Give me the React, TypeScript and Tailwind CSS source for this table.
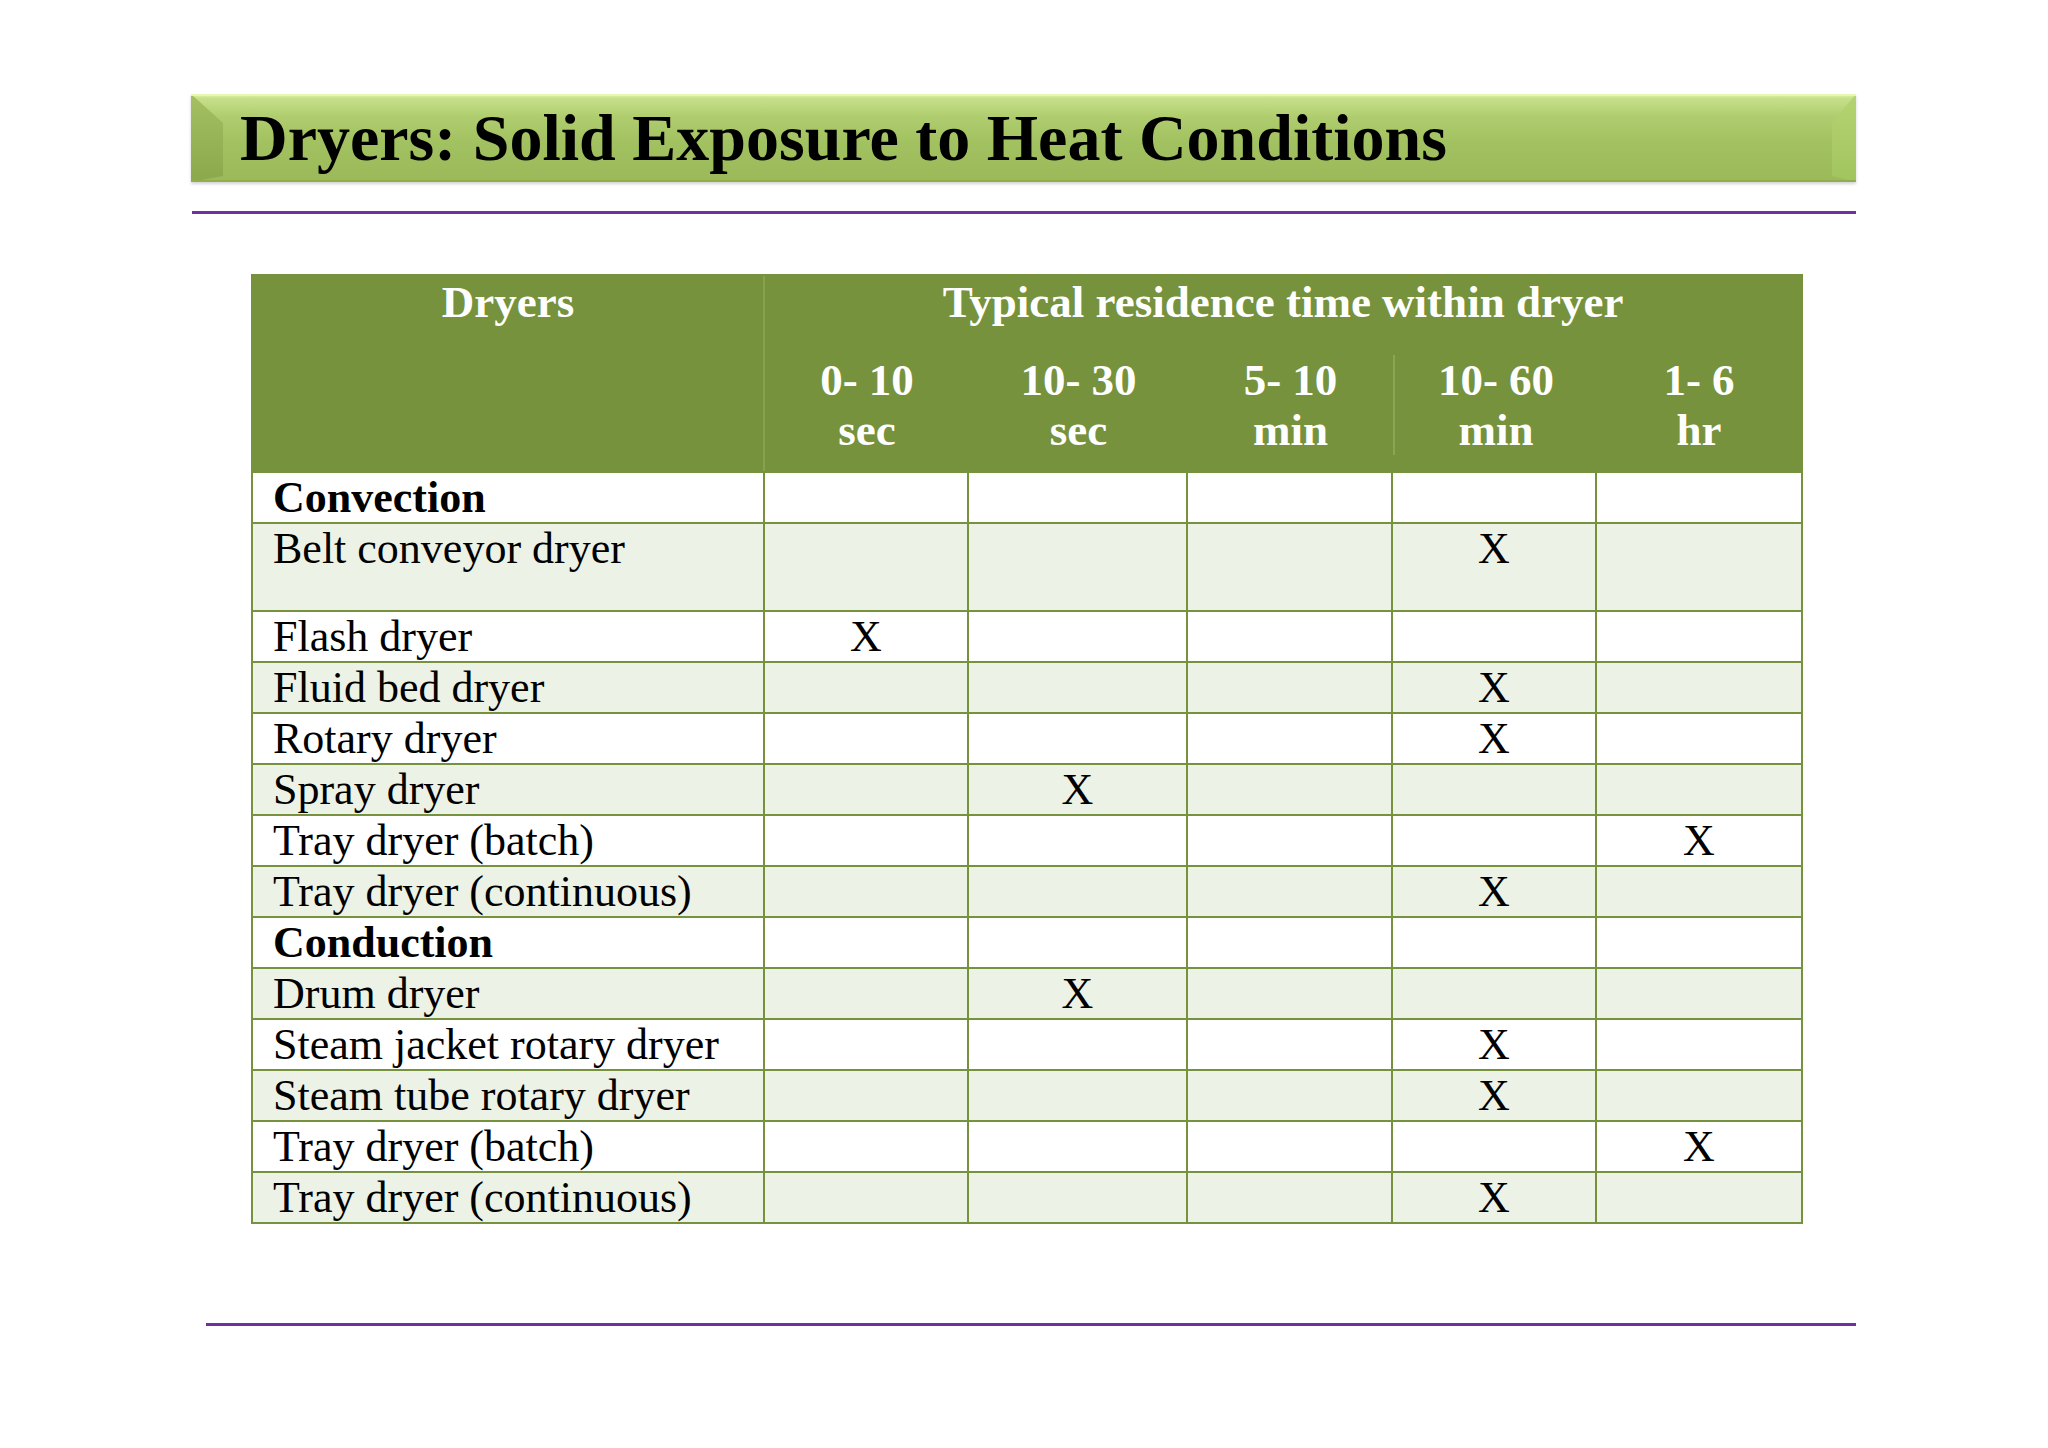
import React from "react";

type Row = { label: string; bold?: boolean; x: number; tall?: boolean };

const rows: Row[] = [
  { label: "Convection", bold: true, x: -1 },
  { label: "Belt conveyor dryer", x: 3, tall: true },
  { label: "Flash dryer", x: 0 },
  { label: "Fluid bed dryer", x: 3 },
  { label: "Rotary dryer", x: 3 },
  { label: "Spray dryer", x: 1 },
  { label: "Tray dryer (batch)", x: 4 },
  { label: "Tray dryer (continuous)", x: 3 },
  { label: "Conduction", bold: true, x: -1 },
  { label: "Drum dryer", x: 1 },
  { label: "Steam jacket rotary dryer", x: 3 },
  { label: "Steam tube rotary dryer", x: 3 },
  { label: "Tray dryer (batch)", x: 4 },
  { label: "Tray dryer (continuous)", x: 3 },
];

const colW = ["w-[204px]", "w-[219px]", "w-[205px]", "w-[204px]", "flex-1"];

const heads: [string, string][] = [
  ["0- 10", "sec"],
  ["10- 30", "sec"],
  ["5- 10", "min"],
  ["10- 60", "min"],
  ["1- 6", "hr"],
];

function TitleBar() {
  return (
    <div className="relative w-[1665px] h-[88px] bg-[linear-gradient(180deg,#e6f5ac_0%,#c6e08a_5%,#b0ce6f_25%,#a2c160_55%,#9bb958_100%)] shadow-[0_2px_3px_rgba(0,0,0,0.18)] flex items-center pl-[49px]">
      <svg
        className="absolute inset-0 w-full h-full"
        viewBox="0 0 1665 88"
        preserveAspectRatio="none"
      >
        <defs>
          <linearGradient id="lf" x1="0" y1="0" x2="0" y2="1">
            <stop offset="0" stopColor="#a4c062" />
            <stop offset="1" stopColor="#8ba94a" />
          </linearGradient>
          <linearGradient id="rf" x1="0" y1="0" x2="0" y2="1">
            <stop offset="0" stopColor="#b4d472" />
            <stop offset="1" stopColor="#a2c45e" />
          </linearGradient>
        </defs>
        <polygon points="0,0 32,29 32,82 0,88" fill="url(#lf)" />
        <polygon points="1665,0 1641,29 1641,82 1665,88" fill="url(#rf)" />
        <rect x="0" y="0" width="1665" height="2" fill="#e8f6b4" />
        <rect x="0" y="86" width="1665" height="2" fill="#90ad50" />
      </svg>
      <h1 className="relative font-['Liberation_Serif',serif] font-bold text-[66px] leading-[76px] text-black whitespace-nowrap">
        Dryers: Solid Exposure to Heat Conditions
      </h1>
    </div>
  );
}

function DataTable() {
  return (
    <div className="w-[1552px] border-2 border-[#76923c] font-['Liberation_Serif',serif]">
      <div className="flex h-[195px] bg-[#76923c] text-white font-bold text-[45px] leading-[50px]">
        <div className="w-[512px] border-r-2 border-[#86a24d] text-center pt-[1px]">Dryers</div>
        <div className="flex-1 flex flex-col pt-[1px]">
          <div className="text-center">Typical residence time within dryer</div>
          <div className="flex mt-[28px]">
            {heads.map((h, i) => (
              <div
                key={i}
                className={`${colW[i]} text-center ${i === 3 ? "border-l-2 border-[#8aa655]" : ""}`}
              >
                <div>{h[0]}</div>
                <div>{h[1]}</div>
              </div>
            ))}
          </div>
        </div>
      </div>
      {rows.map((r, ri) => (
        <div
          key={ri}
          className={`flex border-t-2 border-[#76923c] ${r.tall ? "h-[88px]" : "h-[51px]"} ${
            ri % 2 === 1 ? "bg-[#edf2e6]" : "bg-white"
          } text-[44px] leading-[49px] text-black`}
        >
          <div
            className={`w-[512px] border-r-2 border-[#76923c] pl-[20px] whitespace-nowrap ${
              r.bold ? "font-bold" : ""
            }`}
          >
            {r.label}
          </div>
          {colW.map((w, ci) => (
            <div
              key={ci}
              className={`${w} text-center ${ci < 4 ? "border-r-2 border-[#76923c]" : ""}`}
            >
              {r.x === ci ? "X" : ""}
            </div>
          ))}
        </div>
      ))}
    </div>
  );
}

export default function App() {
  return (
    <div className="w-[2048px] h-[1448px] bg-white overflow-hidden">
      <div className="pt-[94px] pl-[191px]">
        <TitleBar />
      </div>
      <div className="mt-[29px] ml-[192px] w-[1664px] h-[3px] bg-[#7030a0]" />
      <div className="mt-[60px] ml-[251px]">
        <DataTable />
      </div>
      <div className="mt-[99px] ml-[206px] w-[1650px] h-[3px] bg-[#7030a0]" />
    </div>
  );
}
